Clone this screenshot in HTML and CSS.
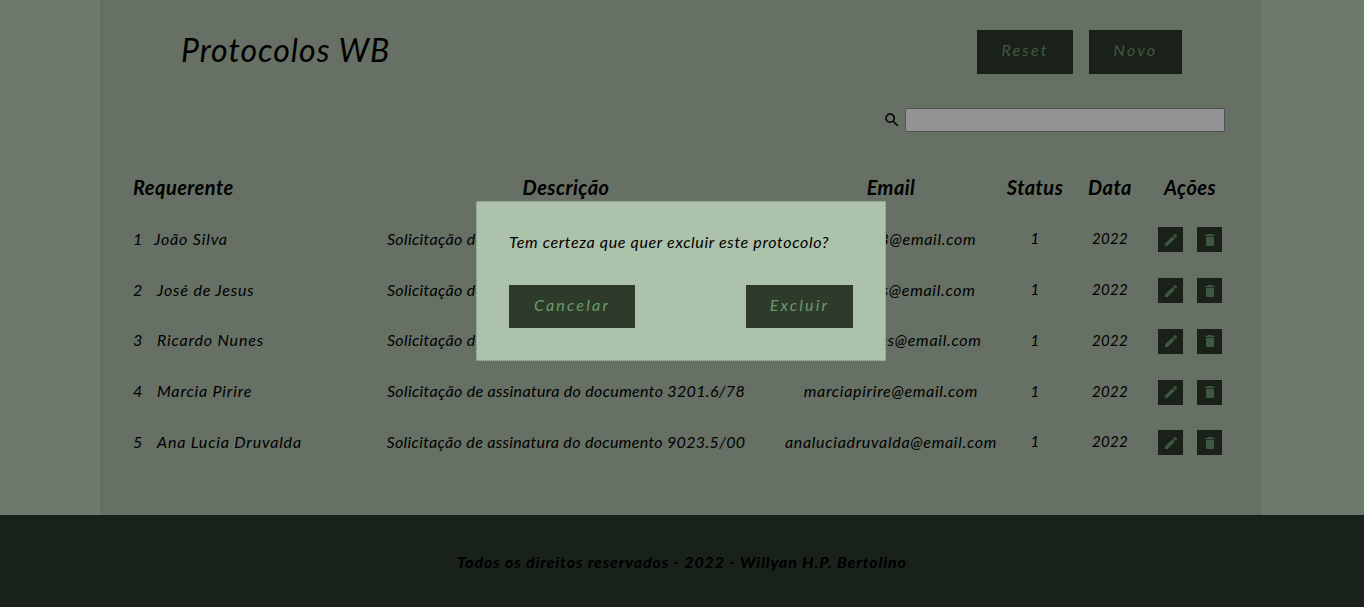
FILE: index.html
```html
<!DOCTYPE html>
<html lang="pt-BR">
<head>
<meta charset="utf-8">
<title>Protocolos WB</title>
<link rel="stylesheet" href="styles.css">
</head>
<body>
<div class="page">
  <main class="content">
    <header class="top">
      <h1 class="title">Protocolos WB</h1>
      <div class="top-actions">
        <button class="btn btn-reset">Reset</button>
        <button class="btn btn-novo">Novo</button>
      </div>
    </header>
    <div class="search">
      <svg class="search-icon" viewBox="0 0 24 24"><path d="M15.5 14h-.79l-.28-.27A6.47 6.47 0 0 0 16 9.5 6.5 6.5 0 1 0 9.5 16c1.61 0 3.09-.59 4.23-1.57l.27.28v.79l5 4.99L20.49 19l-4.99-5zm-6 0C7.01 14 5 11.99 5 9.5S7.01 5 9.5 5 14 7.01 14 9.5 11.99 14 9.5 14z"/></svg>
      <input class="search-input" type="text">
    </div>
    <table class="grid">
      <colgroup>
        <col class="c-name"><col class="c-desc"><col class="c-email"><col class="c-status"><col class="c-date"><col class="c-act">
      </colgroup>
      <thead>
        <tr>
          <th class="left">Requerente</th><th>Descrição</th><th>Email</th><th>Status</th><th>Data</th><th>Ações</th>
        </tr>
      </thead>
      <tbody>
        <tr>
          <td class="left name"><span class="num num-one">1</span>João Silva</td>
          <td class="desc">Solicitação de assinatura do documento 1234.5/67</td><td class="email">joaosilva23@email.com</td><td class="small">1</td><td class="small">2022</td>
          <td><div class="acts"><button class="ico"><svg viewBox="0 0 24 24"><path d="M3 17.25V21h3.75L17.81 9.94l-3.75-3.75L3 17.25zM20.71 7.04a1 1 0 0 0 0-1.41l-2.34-2.34a1 1 0 0 0-1.41 0l-1.83 1.83 3.75 3.75 1.83-1.83z"/></svg></button><button class="ico"><svg viewBox="0 0 24 24"><path d="M6 19c0 1.1.9 2 2 2h8c1.1 0 2-.9 2-2V7H6v12zM19 4h-3.5l-1-1h-5l-1 1H5v2h14V4z"/></svg></button></div></td>
        </tr>
        <tr>
          <td class="left name"><span class="num">2</span>José de Jesus</td>
          <td class="desc">Solicitação de assinatura do documento 5678.9/01</td><td class="email">josedejesus@email.com</td><td class="small">1</td><td class="small">2022</td>
          <td><div class="acts"><button class="ico"><svg viewBox="0 0 24 24"><path d="M3 17.25V21h3.75L17.81 9.94l-3.75-3.75L3 17.25zM20.71 7.04a1 1 0 0 0 0-1.41l-2.34-2.34a1 1 0 0 0-1.41 0l-1.83 1.83 3.75 3.75 1.83-1.83z"/></svg></button><button class="ico"><svg viewBox="0 0 24 24"><path d="M6 19c0 1.1.9 2 2 2h8c1.1 0 2-.9 2-2V7H6v12zM19 4h-3.5l-1-1h-5l-1 1H5v2h14V4z"/></svg></button></div></td>
        </tr>
        <tr>
          <td class="left name"><span class="num">3</span>Ricardo Nunes</td>
          <td class="desc">Solicitação de assinatura do documento 4567.8/90</td><td class="email">ricardonunes@email.com</td><td class="small">1</td><td class="small">2022</td>
          <td><div class="acts"><button class="ico"><svg viewBox="0 0 24 24"><path d="M3 17.25V21h3.75L17.81 9.94l-3.75-3.75L3 17.25zM20.71 7.04a1 1 0 0 0 0-1.41l-2.34-2.34a1 1 0 0 0-1.41 0l-1.83 1.83 3.75 3.75 1.83-1.83z"/></svg></button><button class="ico"><svg viewBox="0 0 24 24"><path d="M6 19c0 1.1.9 2 2 2h8c1.1 0 2-.9 2-2V7H6v12zM19 4h-3.5l-1-1h-5l-1 1H5v2h14V4z"/></svg></button></div></td>
        </tr>
        <tr>
          <td class="left name"><span class="num">4</span>Marcia Pirire</td>
          <td class="desc">Solicitação de assinatura do documento 3201.6/78</td><td class="email">marciapirire@email.com</td><td class="small">1</td><td class="small">2022</td>
          <td><div class="acts"><button class="ico"><svg viewBox="0 0 24 24"><path d="M3 17.25V21h3.75L17.81 9.94l-3.75-3.75L3 17.25zM20.71 7.04a1 1 0 0 0 0-1.41l-2.34-2.34a1 1 0 0 0-1.41 0l-1.83 1.83 3.75 3.75 1.83-1.83z"/></svg></button><button class="ico"><svg viewBox="0 0 24 24"><path d="M6 19c0 1.1.9 2 2 2h8c1.1 0 2-.9 2-2V7H6v12zM19 4h-3.5l-1-1h-5l-1 1H5v2h14V4z"/></svg></button></div></td>
        </tr>
        <tr>
          <td class="left name"><span class="num">5</span>Ana Lucia Druvalda</td>
          <td class="desc">Solicitação de assinatura do documento 9023.5/00</td><td class="email">analuciadruvalda@email.com</td><td class="small">1</td><td class="small">2022</td>
          <td><div class="acts"><button class="ico"><svg viewBox="0 0 24 24"><path d="M3 17.25V21h3.75L17.81 9.94l-3.75-3.75L3 17.25zM20.71 7.04a1 1 0 0 0 0-1.41l-2.34-2.34a1 1 0 0 0-1.41 0l-1.83 1.83 3.75 3.75 1.83-1.83z"/></svg></button><button class="ico"><svg viewBox="0 0 24 24"><path d="M6 19c0 1.1.9 2 2 2h8c1.1 0 2-.9 2-2V7H6v12zM19 4h-3.5l-1-1h-5l-1 1H5v2h14V4z"/></svg></button></div></td>
        </tr>
      </tbody>
    </table>
  </main>
  <footer class="foot">Todos os direitos reservados - 2022 - Willyan H.P. Bertolino</footer>
</div>
<div class="overlay">
  <div class="modal">
    <p class="modal-text">Tem certeza que quer excluir este protocolo?</p>
    <div class="modal-actions">
      <button class="btn btn-cancel">Cancelar</button>
      <button class="btn btn-delete">Excluir</button>
    </div>
  </div>
</div>
</body>
</html>
```
FILE: styles.css
```css
* { box-sizing: border-box; }
html, body { margin: 0; height: 100%; }
body {
  background: #bed2ba;
  color: #000;
  font-family: "Lato", "Open Sans", sans-serif;
  font-style: italic;
  overflow: hidden;
}
.page { height: 607px; display: flex; flex-direction: column; }
.content {
  flex: 1;
  margin: 0 102px 0 100px;
  background: #b0c2ad;
  padding: 30px 37px 0 33px;
}
.top {
  display: flex;
  justify-content: space-between;
  align-items: center;
  height: 44px;
  padding: 0 43px 0 48px;
}
.title { margin: 0 0 4px; font-size: 32px; font-weight: 400; letter-spacing: 1px; line-height: 40px; }
.top-actions { display: flex; gap: 16px; }
.btn {
  border: 0;
  height: 44px;
  background: #2e3a2a;
  color: #6b9a6e;
  font: italic 400 16px "Lato", sans-serif;
  letter-spacing: 2.2px;
  padding: 0 0 4px;
}
.btn-reset { width: 96px; padding-bottom: 6px; }
.btn-novo { width: 93px; padding-bottom: 6px; }
.search {
  display: flex;
  justify-content: flex-end;
  align-items: center;
  gap: 4px;
  margin-top: 34px;
}
.search-icon { width: 18px; height: 18px; fill: #000; }
.search-input {
  width: 320px;
  height: 24px;
  background: #fff;
  border: 1.5px solid #8b8b96;
  border-radius: 2px;
  padding: 0;
}
.grid {
  width: 1092px;
  margin-top: 31px;
  border-collapse: collapse;
  table-layout: fixed;
}
.c-name { width: 222px; }
.c-desc { width: 422px; }
.c-email { width: 228px; }
.c-status { width: 60px; }
.c-date { width: 90px; }
.c-act { width: 70px; }
th { height: 51.5px; padding: 0 0 3px; font-size: 20px; font-weight: 700; text-align: center; letter-spacing: 0.45px; }
td { height: 50.75px; padding: 0 0 3px; font-size: 16px; text-align: center; white-space: nowrap; }
.name { letter-spacing: 0.83px; }
.desc { letter-spacing: 0.34px; }
.email { letter-spacing: 0.7px; }
.small { font-size: 15px; letter-spacing: 0.28px; }
.left { text-align: left; }
.num { display: inline-block; width: 24px; }
.num-one { width: 21px; }
.acts { display: flex; justify-content: center; gap: 14px; margin-top: 3px; }
.ico {
  width: 25px;
  height: 25px;
  border: 0;
  padding: 0;
  background: #2e3a2a;
  display: flex;
  align-items: center;
  justify-content: center;
}
.ico svg { width: 16px; height: 16px; fill: #6b9a6e; }
.foot {
  height: 92px;
  background: #2a3a2d;
  display: flex;
  align-items: center;
  justify-content: center;
  font-size: 16px;
  font-weight: 700;
  letter-spacing: 0.88px;
}
.overlay {
  position: fixed;
  inset: 0;
  background: rgba(0, 0, 0, 0.42);
  display: flex;
  justify-content: center;
  align-items: flex-start;
  padding: 201px 2px 0 0;
}
.modal {
  width: 410px;
  height: 160px;
  background: #adc2aa;
  border: 1px dotted #7c8a79;
  padding: 30px 32px 32px;
  display: flex;
  flex-direction: column;
}
.modal-text { margin: 0; font-size: 16px; line-height: 20px; letter-spacing: 0.66px; }
.modal-actions { display: flex; justify-content: space-between; margin-top: 33px; }
.btn-cancel { width: 126px; height: 43px; }
.btn-delete { width: 107px; height: 43px; }
```
